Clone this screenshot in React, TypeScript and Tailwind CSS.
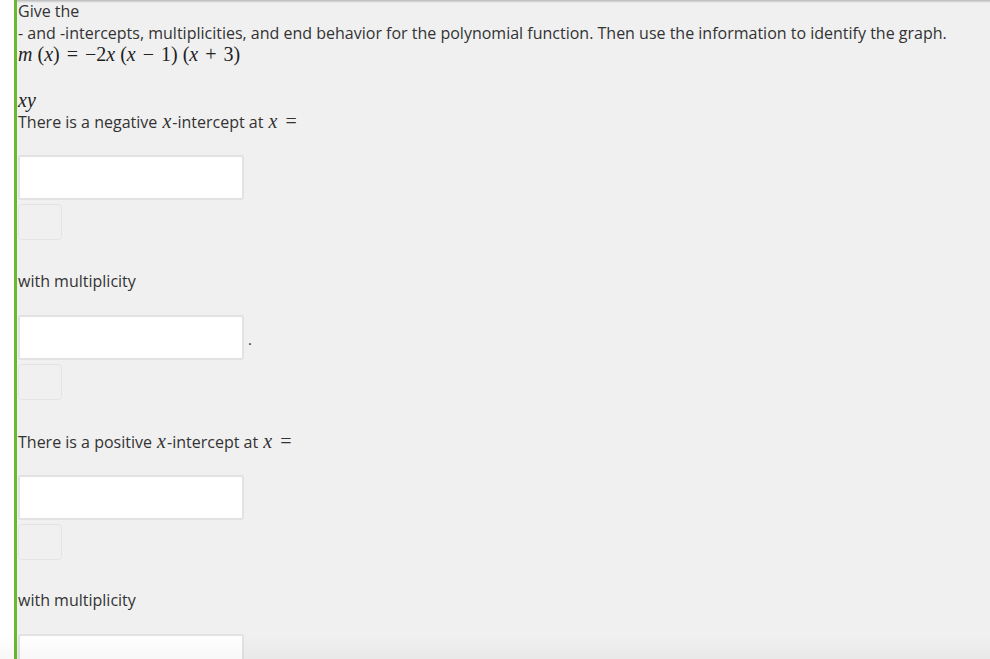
import React from "react";

const sans = "font-['Open_Sans',_'Liberation_Sans',_sans-serif]";
const serif = "font-['Liberation_Serif',_'DejaVu_Serif',_serif]";

function AnswerBox({ trailing }: { trailing?: string }) {
  return (
    <div className="flex flex-col">
      <div className="flex items-center">
        <input
          type="text"
          className="w-[226px] h-[45px] bg-white border-2 border-[#e2e2e2] rounded-[3px] outline-none"
        />
        {trailing && <span className="ml-[4px] mt-[4px] text-[15px]">{trailing}</span>}
      </div>
      {/* tiny preview box */}
      <div className="mt-[4px] w-[44px] h-[36px] border border-[#e4e4e4] rounded-[4px]" />
    </div>
  );
}

function X() {
  return <i className={`${serif} text-[20px] mx-px`}>x</i>;
}

function Op({ children }: { children: React.ReactNode }) {
  return <span className="mx-[7px]">{children}</span>;
}

export default function App() {
  return (
    <div className="relative flex w-[990px] h-[659px] overflow-hidden bg-white">
      <div className="w-[14px] bg-white" />
      <div className="w-[3px] bg-[#67b92f]" />

      <div className={`relative flex-1 bg-[#f0f0f0] pl-px text-[16px] text-[#333] ${sans}`}>
        {/* top edge shadow */}
        <div className="absolute left-0 right-0 top-0 h-[3px] bg-gradient-to-b from-[#b9b9b9] to-[#f0f0f0]" />

        <div className="flex flex-col">
          <p className="h-[22px] leading-[22px]">Give the</p>
          <p className="h-[22px] leading-[22px]">
            - and -intercepts, multiplicities, and end behavior for the polynomial function. Then use the
            information to identify the graph.
          </p>
          <p className={`h-[21px] leading-[21px] text-[20px] text-[#222] ${serif}`}>
            <i>m</i> (<i>x</i>)<Op>=</Op>−2<i>x</i> (<i>x</i>
            <Op>−</Op>1) (<i>x</i>
            <Op>+</Op>3)
          </p>

          <p className={`mt-[24px] h-[22px] leading-[22px] text-[20px] text-[#222] ${serif}`}>
            <i>xy</i>
          </p>
          <p className="h-[21px] leading-[21px]">
            There is a negative <X />-intercept at <X />
            <span className={`${serif} text-[20px] ml-[7px]`}>=</span>
          </p>

          <div className="mt-[23px]">
            <AnswerBox />
          </div>

          <p className="mt-[30px] h-[22px] leading-[22px]">with multiplicity</p>

          <div className="mt-[23px]">
            <AnswerBox trailing="." />
          </div>

          <p className="mt-[30px] h-[22px] leading-[22px]">
            There is a positive <X />-intercept at <X />
            <span className={`${serif} text-[20px] ml-[7px]`}>=</span>
          </p>

          <div className="mt-[23px]">
            <AnswerBox />
          </div>

          <p className="mt-[29px] h-[22px] leading-[22px]">with multiplicity</p>

          <div className="mt-[23px]">
            <AnswerBox />
          </div>
        </div>
      </div>

      {/* bottom fade */}
      <div className="pointer-events-none absolute left-0 right-0 bottom-0 h-[24px] bg-gradient-to-b from-transparent to-black/[0.03]" />
    </div>
  );
}
